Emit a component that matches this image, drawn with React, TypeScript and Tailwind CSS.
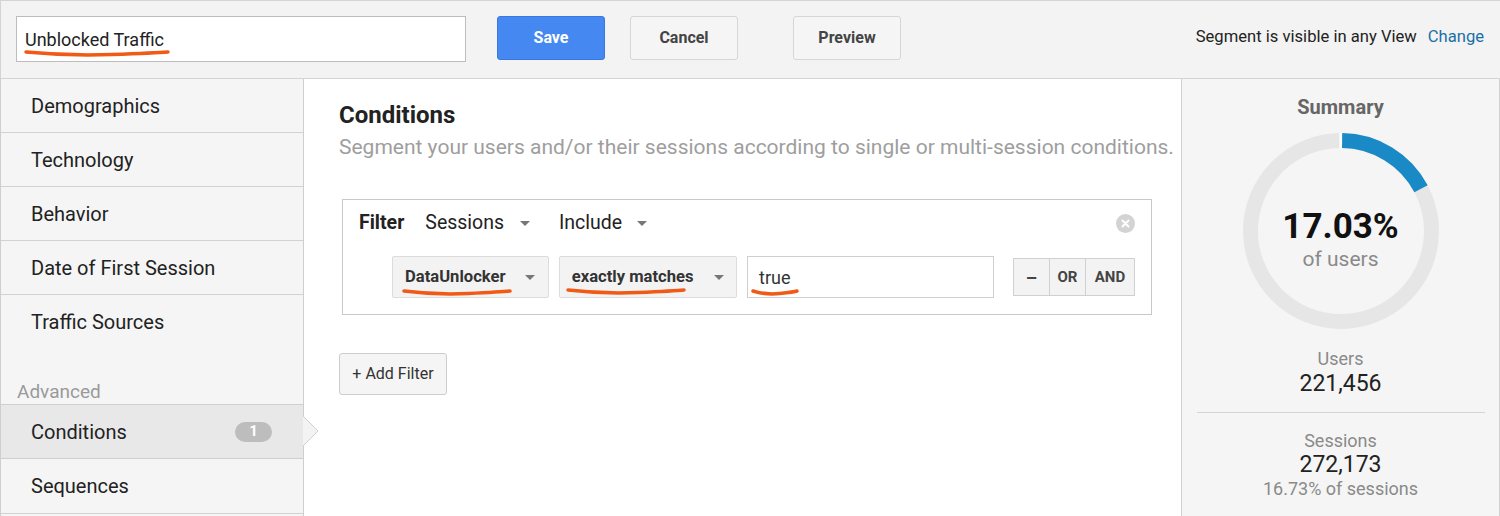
import React from 'react';

const sideItems = ['Demographics', 'Technology', 'Behavior', 'Date of First Session'];

function Caret() {
  return (
    <svg width="12" height="7" viewBox="0 0 12 7" className="shrink-0">
      <path d="M1 1h10L6 6z" fill="#777" />
    </svg>
  );
}

function Scribble({ w, className }: { w: number; className: string }) {
  return (
    <svg
      width={w}
      height="10"
      viewBox={`0 0 ${w} 10`}
      className={`pointer-events-none absolute ${className}`}
    >
      <path
        d={`M2 4 Q ${w * 0.3} 8 ${w * 0.6} 6.5 T ${w - 2} 4`}
        fill="none"
        stroke="#f15a16"
        strokeWidth="3.5"
        strokeLinecap="round"
      />
    </svg>
  );
}

function Donut() {
  const r = 90.5;
  const c = 2 * Math.PI * r;
  const pct = 0.1703;
  const gap = c * 0.004;
  return (
    <svg width="200" height="200" viewBox="0 0 200 200">
      <circle cx="100" cy="100" r={r} fill="none" stroke="#e6e6e6" strokeWidth="15" />
      <circle
        cx="100"
        cy="100"
        r={r}
        fill="none"
        stroke="#fff"
        strokeWidth="15"
        strokeDasharray={`${gap * 2} ${c}`}
        transform="rotate(-91 100 100)"
      />
      <circle
        cx="100"
        cy="100"
        r={r}
        fill="none"
        stroke="#1a8ac6"
        strokeWidth="15"
        strokeDasharray={`${c * pct} ${c}`}
        transform="rotate(-89.3 100 100)"
      />
    </svg>
  );
}

export default function App() {
  return (
    <div
      className="flex h-[516px] w-[1500px] flex-col overflow-hidden bg-white text-[#222]"
      style={{ fontFamily: 'Roboto, "Liberation Sans", sans-serif' }}
    >
      {/* top bar */}
      <div className="flex h-[79px] shrink-0 items-start border-b border-t border-l border-[#d4d4d4] bg-[#f3f3f3] pl-[15px] pr-4 pt-[15px]">
        <div className="relative flex h-[46px] w-[450px] items-center border border-[#bdbdbd] bg-white pl-[8px] text-[18px]">
          Unblocked Traffic
          <Scribble w={146} className="left-[7px] top-[31px]" />
        </div>
        <button className="ml-[31px] h-[44px] w-[108px] rounded-[3px] border border-[#3a78e0] bg-[#4688f1] text-[16px] font-bold text-white">
          Save
        </button>
        <button className="ml-[25px] h-[44px] w-[108px] rounded-[3px] border border-[#d6d6d6] bg-[#f5f5f5] text-[16px] font-bold text-[#444]">
          Cancel
        </button>
        <button className="ml-[55px] h-[44px] w-[108px] rounded-[3px] border border-[#d6d6d6] bg-[#f5f5f5] text-[16px] font-bold text-[#444]">
          Preview
        </button>
        <div className="ml-auto flex h-[43px] items-center gap-[11px] text-[16.6px]">
          <span className="text-[#222]">Segment is visible in any View</span>
          <span className="text-[#1c6fa6]">Change</span>
        </div>
      </div>

      <div className="flex min-h-0 flex-1">
        {/* sidebar */}
        <div className="relative w-[304px] shrink-0 border-l border-r border-[#cfcfcf] bg-[#f5f5f5]">
          {sideItems.map((s) => (
            <div
              key={s}
              className="flex h-[54px] items-center border-b border-[#d2d2d2] pl-[30px] text-[20px] text-[#222]"
            >
              {s}
            </div>
          ))}
          <div className="flex h-[54px] items-center pl-[30px] text-[20px]">Traffic Sources</div>
          <div className="flex h-[55px] items-end pl-[16px] text-[19px] leading-[24px] text-[#9a9a9a]">Advanced</div>
          <div className="flex h-[55px] items-center justify-between border-b border-t border-[#cfcfcf] bg-[#e8e8e8] pl-[30px] pr-[31px] text-[20px]">
            <span>Conditions</span>
            <span className="flex h-[20px] w-[37px] items-center justify-center rounded-full bg-[#bdbdbd] text-[15px] font-bold text-white">
              1
            </span>
          </div>
          <div className="flex h-[55px] items-center border-b border-[#d2d2d2] pl-[30px] text-[20px]">Sequences</div>
          <svg width="18" height="32" viewBox="0 0 18 32" className="absolute left-[302px] top-[337px]">
            <path d="M0 0 L15 15 L0 30" fill="#f3f3f3" stroke="#cfcfcf" strokeWidth="1" />
          </svg>
        </div>

        {/* main */}
        <div className="min-w-0 flex-1 bg-white pl-[35px] pt-[21px]">
          <h2 className="text-[24px] font-bold leading-[30px] text-[#222]">Conditions</h2>
          <p className="mt-[4px] whitespace-nowrap text-[21px] leading-[26px] text-[#9e9e9e]">
            Segment your users and/or their sessions according to single or multi-session conditions.
          </p>

          <div className="ml-[3px] mt-[39px] w-[810px] border border-[#c8c8c8] px-[16px] pb-[16px] pt-[11px]">
            <div className="flex h-[24px] items-center text-[19.5px]">
              <span className="font-bold">Filter</span>
              <span className="ml-[21px]">Sessions</span>
              <span className="ml-[15px]">
                <Caret />
              </span>
              <span className="ml-[28px]">Include</span>
              <span className="ml-[14px]">
                <Caret />
              </span>
              <span className="ml-auto flex h-[19px] w-[19px] items-center justify-center rounded-full bg-[#d3d3d3]">
                <svg width="9" height="9" viewBox="0 0 9 9">
                  <path d="M1.5 1.5l6 6M7.5 1.5l-6 6" stroke="#fff" strokeWidth="2" strokeLinecap="round" />
                </svg>
              </span>
            </div>

            <div className="mt-[21px] flex items-center pl-[33px]">
              <div className="relative flex h-[42px] w-[159px] items-center justify-between rounded-[2px] border border-[#dcdcdc] bg-[#f3f3f3] pl-[12px] pr-[12px] text-[16.6px] font-bold text-[#333]">
                DataUnlocker
                <Caret />
                <Scribble w={110} className="left-[9px] top-[30px]" />
              </div>
              <div className="relative ml-[10px] flex h-[42px] w-[181px] items-center justify-between rounded-[2px] border border-[#dcdcdc] bg-[#f3f3f3] pl-[12px] pr-[11px] text-[16.6px] font-bold text-[#333]">
                exactly matches
                <Caret />
                <Scribble w={120} className="left-[6px] top-[29px]" />
              </div>
              <div className="relative ml-[10px] flex h-[42px] w-[251px] items-center border border-[#cfcfcf] bg-white pl-[11px] text-[18px] text-[#333]">
                true
                <Scribble w={48} className="left-[3px] top-[30px]" />
              </div>
              <div className="ml-[19px] flex h-[38px] border border-[#d0d0d0] bg-[#f3f3f3] text-[15px] font-bold text-[#444]">
                <span className="flex w-[36px] items-center justify-center border-r border-[#d0d0d0] text-[18px]">–</span>
                <span className="flex w-[36px] items-center justify-center border-r border-[#d0d0d0]">OR</span>
                <span className="flex w-[48px] items-center justify-center">AND</span>
              </div>
            </div>
          </div>

          <button className="mt-[38px] h-[42px] w-[108px] rounded-[3px] border border-[#cdcdcd] bg-[#f5f5f5] text-[16px] text-[#333]">
            + Add Filter
          </button>
        </div>

        {/* summary */}
        <div className="flex w-[319px] shrink-0 flex-col items-center border-l border-r border-[#d0d0d0] bg-[#f5f5f5] pt-[15px]">
          <div className="text-[20px] font-bold leading-[26px] text-[#666]">Summary</div>
          <div className="relative mt-[11px] h-[200px] w-[200px]">
            <Donut />
            <div className="absolute inset-0 flex flex-col items-center justify-center pt-[16px]">
              <span className="text-[35px] font-bold leading-[40px] text-[#111]">17.03%</span>
              <span className="text-[21px] leading-[24px] text-[#8a8a8a]">of users</span>
            </div>
          </div>
          <div className="mt-[17px] text-[18px] leading-[22px] text-[#8a8a8a]">Users</div>
          <div className="text-[23px] leading-[28px] text-[#222]">221,456</div>
          <div className="mt-[14px] h-px w-[288px] bg-[#d4d4d4]" />
          <div className="mt-[17px] text-[18px] leading-[22px] text-[#8a8a8a]">Sessions</div>
          <div className="text-[23px] leading-[26px] text-[#222]">272,173</div>
          <div className="text-[18px] leading-[22px] text-[#8a8a8a]">16.73% of sessions</div>
        </div>
      </div>
    </div>
  );
}
